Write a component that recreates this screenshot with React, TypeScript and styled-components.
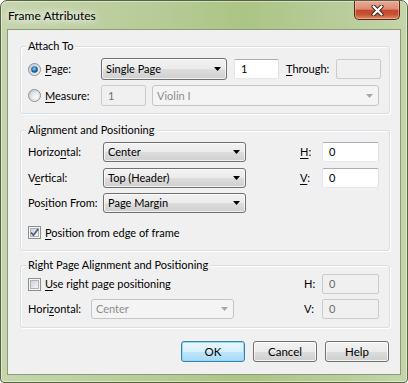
import React from 'react';
import styled, { createGlobalStyle } from 'styled-components';

const Global = createGlobalStyle`
  html, body { margin: 0; padding: 0; background: #ffffff; }
  body {
    font-family: Lato, "Noto Sans", "Liberation Sans", sans-serif;
    font-size: 11px;
    color: #000;
  }
  * { box-sizing: border-box; }
`;

const Window = styled.div`
  width: 408px;
  height: 383px;
  display: flex;
  flex-direction: column;
  padding: 0 6px 7px 6px;
  border: 1px solid #55643f;
  border-radius: 7px 7px 4px 4px;
  background: linear-gradient(90deg, #c6d5ad 0%, #b8cc99 35%, #abc585 60%, #b9cd9c 85%, #c5d5ab 100%);
  box-shadow: inset 0 0 0 1px rgba(255, 255, 255, 0.45);
`;

const TitleBar = styled.div`
  height: 28px;
  display: flex;
  align-items: flex-start;
  justify-content: space-between;
  flex-shrink: 0;
`;

const Title = styled.div`
  padding: 7px 0 0 1px;
  line-height: 16px;
  font-size: 12px;
  color: #000;
  text-shadow: 0 0 6px #fff, 0 0 10px #fff, 0 0 14px rgba(255, 255, 255, 0.8);
`;

const CloseButton = styled.div`
  width: 46px;
  height: 19px;
  margin-right: 1px;
  display: flex;
  align-items: center;
  justify-content: center;
  border: 1px solid #5d2618;
  border-top: none;
  border-radius: 0 0 5px 5px;
  background: linear-gradient(180deg, #e9a996 0%, #dc8b74 45%, #c4472a 52%, #c65434 75%, #dc8e66 100%);
  box-shadow: inset 0 0 0 1px rgba(255, 210, 190, 0.45);
`;

const Client = styled.div`
  flex: 1;
  display: flex;
  flex-direction: column;
  padding: 0 10px 0 12px;
  background: #f0f0f0;
  border: 1px solid #8b9a78;
`;

const GroupBox = styled.div<{ $mt: number; $pb: number }>`
  margin-top: ${(p) => p.$mt}px;
  padding-bottom: ${(p) => p.$pb}px;
  border: 1px solid #d5dfe5;
  border-radius: 3px;
  box-shadow: inset 1px 1px 0 #fff, 1px 1px 0 #fff;
  display: flex;
  flex-direction: column;
`;

const Caption = styled.div`
  align-self: flex-start;
  margin: -9px 0 0 5px;
  padding: 0 2px;
  line-height: 16px;
  height: 16px;
  background: #f0f0f0;
  white-space: nowrap;
`;

const Row = styled.div<{ $h: number; $mt: number }>`
  display: flex;
  align-items: center;
  height: ${(p) => p.$h}px;
  margin-top: ${(p) => p.$mt}px;
  padding-left: 7px;
`;

const Option = styled.div<{ $w?: number }>`
  display: flex;
  align-items: center;
  gap: 4px;
  ${(p) => (p.$w ? `width: ${p.$w}px;` : '')}
  white-space: nowrap;
  line-height: 16px;
`;

const Label = styled.div<{ $w?: number; $ml?: number; $pl?: number }>`
  ${(p) => (p.$w ? `width: ${p.$w}px;` : '')}
  margin-left: ${(p) => p.$ml ?? 0}px;
  padding-left: ${(p) => p.$pl ?? 0}px;
  line-height: 16px;
  white-space: nowrap;
`;

const SideLabel = styled(Label)`
  grid-column: 4;
`;

const Key = styled.span`
  text-decoration: underline;
  text-underline-offset: 2px;
`;

const ComboBox = styled.div<{ $w: number; $h: number; $disabled?: boolean }>`
  width: ${(p) => p.$w}px;
  height: ${(p) => p.$h}px;
  display: flex;
  align-items: center;
  justify-content: space-between;
  padding: 0 5px 0 4px;
  border: 1px solid ${(p) => (p.$disabled ? '#c3c6c9' : '#707070')};
  border-radius: 3px;
  background: ${(p) =>
    p.$disabled
      ? '#f4f4f4'
      : 'linear-gradient(180deg, #f2f2f2 0%, #ebebeb 50%, #dddddd 51%, #cfcfcf 100%)'};
  box-shadow: ${(p) => (p.$disabled ? 'none' : 'inset 0 0 0 1px rgba(255,255,255,0.7)')};
  color: ${(p) => (p.$disabled ? '#8d8d8d' : '#000')};
  line-height: 16px;
  white-space: nowrap;
`;

const Field = styled.div<{ $w: number; $h: number; $disabled?: boolean; $ml?: number }>`
  width: ${(p) => p.$w}px;
  height: ${(p) => p.$h}px;
  margin-left: ${(p) => p.$ml ?? 0}px;
  display: flex;
  align-items: center;
  padding-left: 6px;
  border: 1px solid;
  border-radius: 2px;
  border-color: ${(p) => (p.$disabled ? '#c9cbce' : '#abadb3 #dbdfe6 #e3e9ef #e2e3ea')};
  background: ${(p) => (p.$disabled ? '#f0f0f0' : '#ffffff')};
  color: ${(p) => (p.$disabled ? '#6d6d6d' : '#000')};
  line-height: 16px;
`;

const Grid = styled.div<{ $cols: string; $rows: string; $mt: number }>`
  display: grid;
  grid-template-columns: ${(p) => p.$cols};
  grid-template-rows: ${(p) => p.$rows};
  row-gap: 5px;
  align-items: center;
  margin-top: ${(p) => p.$mt}px;
  padding: 0 10px 0 7px;
`;

const SpanCell = styled.div`
  grid-column: 1 / 4;
`;

const ButtonRow = styled.div`
  display: flex;
  justify-content: flex-end;
  gap: 8px;
  margin-top: 13px;
  padding-right: 1px;
`;

const Button = styled.div<{ $default?: boolean }>`
  width: 64px;
  height: 21px;
  display: flex;
  align-items: center;
  justify-content: center;
  line-height: 16px;
  font-size: 11.5px;
  border-radius: 3px;
  border: 1px solid ${(p) => (p.$default ? '#3c7fb1' : '#707070')};
  background: ${(p) =>
    p.$default
      ? 'linear-gradient(180deg, #eaf6fd 0%, #d9f0fc 50%, #bee6fd 51%, #a7d9f5 100%)'
      : 'linear-gradient(180deg, #f2f2f2 0%, #ebebeb 50%, #dddddd 51%, #cfcfcf 100%)'};
  box-shadow: ${(p) =>
    p.$default ? 'inset 0 0 0 1px #8fdcfb' : 'inset 0 0 0 1px rgba(255,255,255,0.75)'};
`;

function CloseGlyph() {
  return (
    <svg width="13" height="11" viewBox="0 0 13 11">
      <path d="M2.5 1.5 L10.5 9.5 M10.5 1.5 L2.5 9.5" stroke="#45251c" strokeWidth="4.2" strokeLinecap="round" fill="none" />
      <path d="M2.5 1.5 L10.5 9.5 M10.5 1.5 L2.5 9.5" stroke="#ffffff" strokeWidth="2.2" strokeLinecap="round" fill="none" />
    </svg>
  );
}

function Radio({ checked }: { checked?: boolean }) {
  return (
    <svg width="13" height="13" viewBox="0 0 13 13">
      <defs>
        <linearGradient id="radioRing" x1="0" y1="0" x2="1" y2="1">
          <stop offset="0" stopColor="#c5c9cf" />
          <stop offset="1" stopColor="#f7f7f7" />
        </linearGradient>
        <radialGradient id="radioDot" cx="0.45" cy="0.4" r="0.6">
          <stop offset="0" stopColor="#9ad9ff" />
          <stop offset="0.5" stopColor="#2a7cc8" />
          <stop offset="1" stopColor="#0d3e78" />
        </radialGradient>
        <linearGradient id="radioEmpty" x1="0" y1="0" x2="1" y2="1">
          <stop offset="0" stopColor="#dadde2" />
          <stop offset="1" stopColor="#ffffff" />
        </linearGradient>
      </defs>
      <circle cx="6.5" cy="6.5" r="6" fill="url(#radioRing)" stroke="#8e8f8f" strokeWidth="1" />
      {checked ? (
        <circle cx="6.5" cy="6.5" r="3.3" fill="url(#radioDot)" />
      ) : (
        <circle cx="6.5" cy="6.5" r="3.6" fill="url(#radioEmpty)" />
      )}
    </svg>
  );
}

function Check({ checked }: { checked?: boolean }) {
  return (
    <svg width="13" height="13" viewBox="0 0 13 13">
      <defs>
        <linearGradient id="chkIn" x1="0" y1="0" x2="1" y2="1">
          <stop offset="0" stopColor="#cbcfd5" />
          <stop offset="1" stopColor="#f7f7f7" />
        </linearGradient>
      </defs>
      <rect x="0.5" y="0.5" width="12" height="12" fill="#f4f4f4" stroke="#8e8f8f" />
      <rect x="2.5" y="2.5" width="8" height="8" fill="url(#chkIn)" stroke="#aeb3b9" strokeWidth="1" />
      {checked && (
        <path d="M3 6.5 L5.4 9.2 L10.2 3" stroke="#4d6185" strokeWidth="1.8" fill="none" />
      )}
    </svg>
  );
}

function Dropdown({ value, w, h, disabled }: { value: string; w: number; h: number; disabled?: boolean }) {
  return (
    <ComboBox $w={w} $h={h} $disabled={disabled}>
      <span>{value}</span>
      <svg width="7" height="4" viewBox="0 0 7 4">
        <path d="M0 0 H7 L3.5 4 Z" fill={disabled ? '#a8a8a8' : '#000'} />
      </svg>
    </ComboBox>
  );
}

export default function App() {
  return (
    <>
      <Global />
      <Window>
        <TitleBar>
          <Title>Frame Attributes</Title>
          <CloseButton>
            <CloseGlyph />
          </CloseButton>
        </TitleBar>
        <Client>
          <GroupBox $mt={16} $pb={7}>
            <Caption>Attach To</Caption>
            <Row $h={22} $mt={4}>
              <Option $w={73}>
                <Radio checked />
                <span><Key>P</Key>age:</span>
              </Option>
              <Dropdown value="Single Page" w={126} h={22} />
              <Field $w={45} $h={20} $ml={7}>1</Field>
              <Label $w={50} $ml={7}><Key>T</Key>hrough:</Label>
              <Field $w={45} $h={20} $disabled />
            </Row>
            <Row $h={21} $mt={5}>
              <Option $w={73}>
                <Radio />
                <span><Key>M</Key>easure:</span>
              </Option>
              <Field $w={45} $h={21} $disabled>1</Field>
              <Label $ml={6}>
                <Dropdown value="Violin I" w={227} h={21} disabled />
              </Label>
            </Row>
          </GroupBox>

          <GroupBox $mt={16} $pb={11}>
            <Caption>Alignment and Positioning</Caption>
            <Grid $cols="75px 143px 1fr 22px 57px" $rows="20px 21px 20px" $mt={4}>
              <Label>Horizo<Key>n</Key>tal:</Label>
              <Dropdown value="Center" w={143} h={20} />
              <SideLabel><Key>H</Key>:</SideLabel>
              <Field $w={57} $h={20}>0</Field>
              <Label>V<Key>e</Key>rtical:</Label>
              <Dropdown value="Top (Header)" w={143} h={20} />
              <SideLabel><Key>V</Key>:</SideLabel>
              <Field $w={57} $h={20}>0</Field>
              <Label>Pos<Key>i</Key>tion From:</Label>
              <Dropdown value="Page Margin" w={143} h={20} />
            </Grid>
            <Row $h={13} $mt={13}>
              <Option>
                <Check checked />
                <span><Key>P</Key>osition from edge of frame</span>
              </Option>
            </Row>
          </GroupBox>

          <GroupBox $mt={14} $pb={8}>
            <Caption>Right Page Alignment and Positioning</Caption>
            <Grid $cols="63px 143px 1fr 22px 57px" $rows="20px 20px" $mt={1}>
              <SpanCell>
                <Option>
                  <Check />
                  <span><Key>U</Key>se right page positioning</span>
                </Option>
              </SpanCell>
              <SideLabel $pl={4}>H:</SideLabel>
              <Field $w={57} $h={20} $disabled>0</Field>
              <Label>Hori<Key>z</Key>ontal:</Label>
              <Dropdown value="Center" w={143} h={20} disabled />
              <SideLabel $pl={4}>V:</SideLabel>
              <Field $w={57} $h={20} $disabled>0</Field>
            </Grid>
          </GroupBox>

          <ButtonRow>
            <Button $default>OK</Button>
            <Button>Cancel</Button>
            <Button>Help</Button>
          </ButtonRow>
        </Client>
      </Window>
    </>
  );
}
